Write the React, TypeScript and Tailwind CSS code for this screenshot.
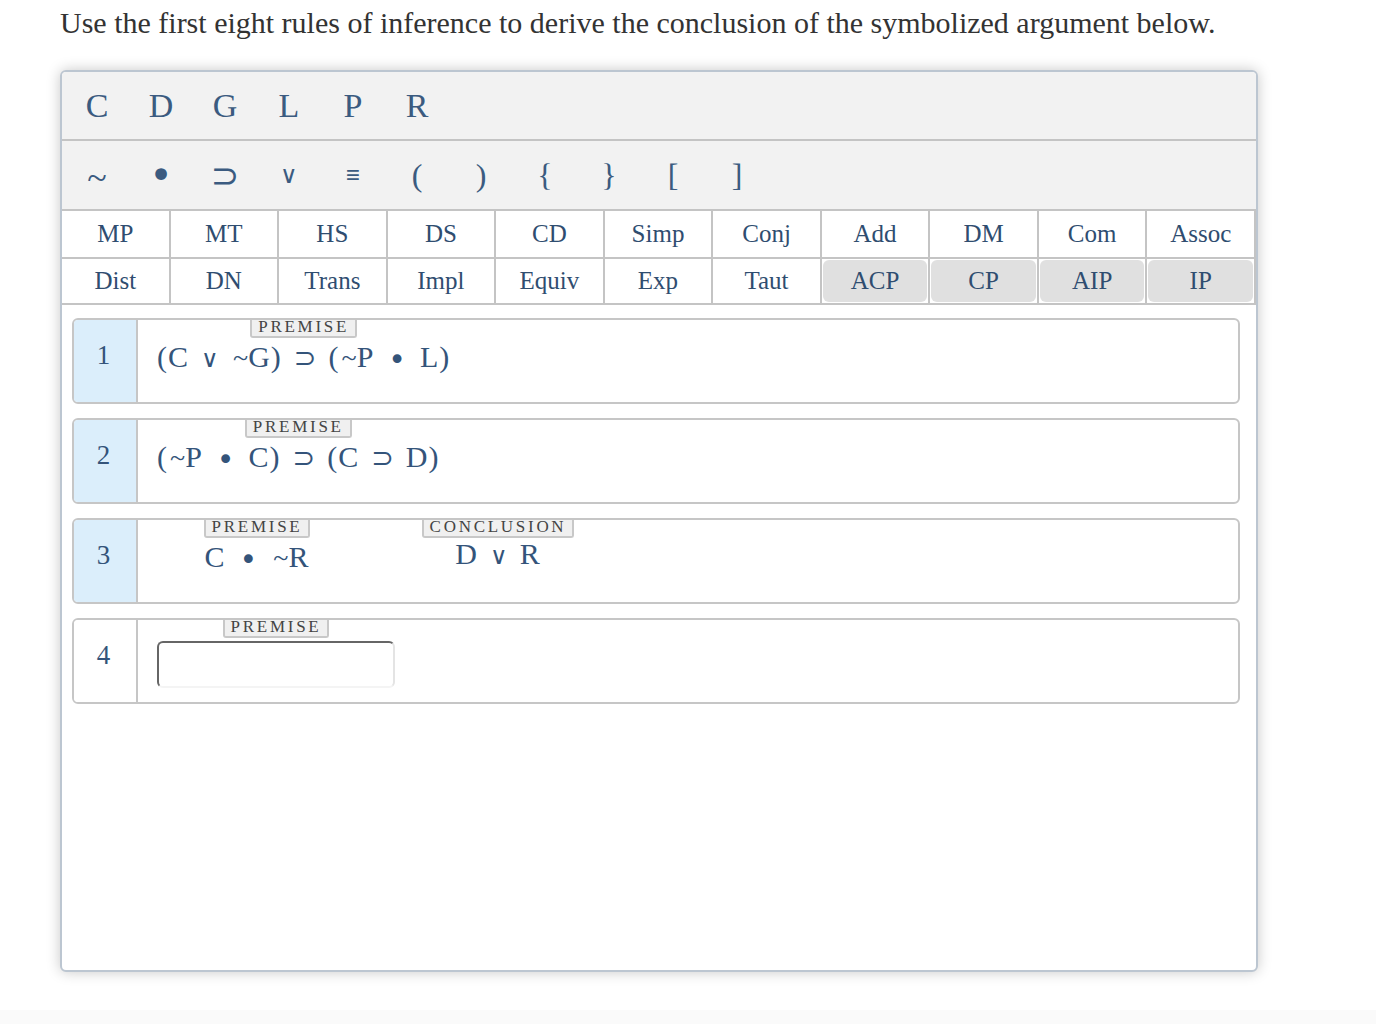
import React from "react";

// Proof builder: variable palette, operator palette, rule grid and the proof lines.

const serif = "font-['Palatino_Linotype','Book_Antiqua',Palatino,'Liberation_Serif',serif]";

const variables = ["C", "D", "G", "L", "P", "R"];
const symbols = ["~", "•", "⊃", "∨", "≡", "(", ")", "{", "}", "[", "]"];

const rulesTop = ["MP", "MT", "HS", "DS", "CD", "Simp", "Conj", "Add", "DM", "Com", "Assoc"];
const rulesBottom = ["Dist", "DN", "Trans", "Impl", "Equiv", "Exp", "Taut", "ACP", "CP", "AIP", "IP"];
const shaded = new Set(["ACP", "CP", "AIP", "IP"]);

// render a formula glyph by glyph so the operators get the weight they have in the picture
function Expr({ text }: { text: string }) {
  return (
    <span className="inline-flex items-baseline text-[#34547a] whitespace-pre">
      {Array.from(text).map((ch, i) => {
        if (ch === " ") return <span key={i} className="inline-block w-[12px]" />;
        if (ch === "•")
          return (
            <span key={i} className="relative top-[3px] text-[30px] leading-none font-['DejaVu_Sans',sans-serif] px-[2px]">
              •
            </span>
          );
        if (ch === "∨")
          return (
            <span key={i} className="text-[24px] leading-none font-['DejaVu_Sans',sans-serif] font-light">
              ∨
            </span>
          );
        if (ch === "⊃")
          return (
            <span key={i} className="text-[27px] leading-none font-['DejaVu_Sans',sans-serif]">
              ⊃
            </span>
          );
        if (ch === "~")
          return (
            <span key={i} className="text-[28px] leading-none font-['Liberation_Serif',serif] pl-[2px]">
              ~
            </span>
          );
        return (
          <span key={i} className={`text-[30px] leading-none tracking-[1px] ${serif}`}>
            {ch}
          </span>
        );
      })}
    </span>
  );
}

function Tag({ children }: { children: React.ReactNode }) {
  return (
    <div className="h-[20px] px-[6px] bg-[#f0f0f0] border-2 border-t-0 border-[#c8c8c8] rounded-b-[3px] text-[17px] leading-[18px] tracking-[0.16em] text-[#444] font-['Liberation_Serif',serif]">
      {children}
    </div>
  );
}

function Formula({ label, text, className = "" }: { label: string; text: string; className?: string }) {
  return (
    <div className={`flex flex-col items-center min-w-[200px] ${className}`}>
      <Tag>{label}</Tag>
      <div className="h-[38px] flex items-center">
        <Expr text={text} />
      </div>
    </div>
  );
}

function ProofLine({ n, done, children }: { n: number; done: boolean; children: React.ReactNode }) {
  return (
    <div className="flex h-[86px] border-2 border-[#c6c6c6] rounded-[6px] overflow-hidden">
      <div
        className={`w-[64px] shrink-0 flex items-center justify-center pb-3 pr-[3px] border-r-2 border-[#c6c6c6] text-[27px] text-[#34547a] ${serif} ${
          done ? "bg-[#dbeefb]" : "bg-white"
        }`}
      >
        {n}
      </div>
      <div className="flex items-start pl-[19px] -mt-[2px]">{children}</div>
    </div>
  );
}

export default function App() {
  return (
    <div className="min-h-[1024px] bg-white font-['Liberation_Serif',serif]">
      <div className="pl-[60px] pr-[118px]">
        <h1 className="pt-[6px] text-[30px] leading-[34px] text-[#333] whitespace-nowrap">
          Use the first eight rules of inference to derive the conclusion of the symbolized argument below.
        </h1>

        <div className="mt-[30px] h-[902px] w-[1198px] border-2 border-[#bcc6d1] rounded-[6px] bg-white shadow-[0_0_14px_rgba(0,0,0,0.22)] overflow-hidden flex flex-col">
          {/* variables */}
          <div className="h-[69px] shrink-0 bg-[#f2f2f2] border-b-2 border-[#c4c4c4] flex items-center pl-[3px]">
            {variables.map((v) => (
              <div key={v} className={`w-[64px] text-center text-[34px] text-[#3b5b80] ${serif}`}>
                {v}
              </div>
            ))}
          </div>

          {/* operators */}
          <div className="h-[70px] shrink-0 bg-[#f2f2f2] border-b-2 border-[#c4c4c4] flex items-center pl-[3px]">
            {symbols.map((s) => (
              <div
                key={s}
                className={`w-[64px] text-center text-[#3b5b80] ${
                  s === "∨" || s === "≡"
                    ? "text-[24px] font-['DejaVu_Sans',sans-serif] font-light"
                    : s === "•"
                      ? "text-[40px] font-['DejaVu_Sans',sans-serif]"
                      : s === "⊃"
                        ? "text-[34px] font-['DejaVu_Sans',sans-serif]"
                        : s === "~"
                          ? "text-[36px] font-['Liberation_Serif',serif] pt-[6px]"
                          : `text-[32px] ${serif}`
                }`}
              >
                {s}
              </div>
            ))}
          </div>

          {/* rules */}
          <div className="shrink-0 grid grid-cols-11 border-b-2 border-[#c4c4c4]">
            {rulesTop.map((r) => (
              <div
                key={r}
                className={`h-[48px] flex items-center justify-center text-[25px] text-[#2f4d70] border-r-2 border-b-2 border-[#c4c4c4] last:border-r-0 ${serif}`}
              >
                {r}
              </div>
            ))}
            {rulesBottom.map((r, i) => (
              <div
                key={r}
                className={`h-[44px] p-px border-r-2 border-[#c4c4c4] ${i === 10 ? "border-r-0" : ""}`}
              >
                <div
                  className={`h-full flex items-center justify-center text-[25px] text-[#2f4d70] rounded-[6px] ${serif} ${
                    shaded.has(r) ? "bg-[#e0e0e0]" : "bg-white"
                  }`}
                >
                  {r}
                </div>
              </div>
            ))}
          </div>

          {/* proof */}
          <div className="pl-[10px] pr-[16px] pt-[13px] flex flex-col gap-[14px]">
            <ProofLine n={1} done>
              <Formula label="PREMISE" text="(C ∨ ~G) ⊃ (~P • L)" />
            </ProofLine>
            <ProofLine n={2} done>
              <Formula label="PREMISE" text="(~P • C) ⊃ (C ⊃ D)" />
            </ProofLine>
            <ProofLine n={3} done>
              <Formula label="PREMISE" text="C • ~R" />
              <div className="ml-[41px] flex flex-col items-center min-w-[200px]">
                <Tag>CONCLUSION</Tag>
                <div className="h-[32px] flex items-center">
                  <Expr text="D ∨ R" />
                </div>
              </div>
            </ProofLine>
            <ProofLine n={4} done={false}>
              <div className="flex flex-col items-center">
                <Tag>PREMISE</Tag>
                <div className="mt-[3px] w-[238px] h-[47px] border-2 border-[#666] border-r-[#e4e4e4] border-b-[#f4f4f4] rounded-[6px] bg-white" />
              </div>
            </ProofLine>
          </div>
        </div>
      </div>
      <div className="mt-[38px] h-[14px] bg-[#fafafa]" />
    </div>
  );
}
